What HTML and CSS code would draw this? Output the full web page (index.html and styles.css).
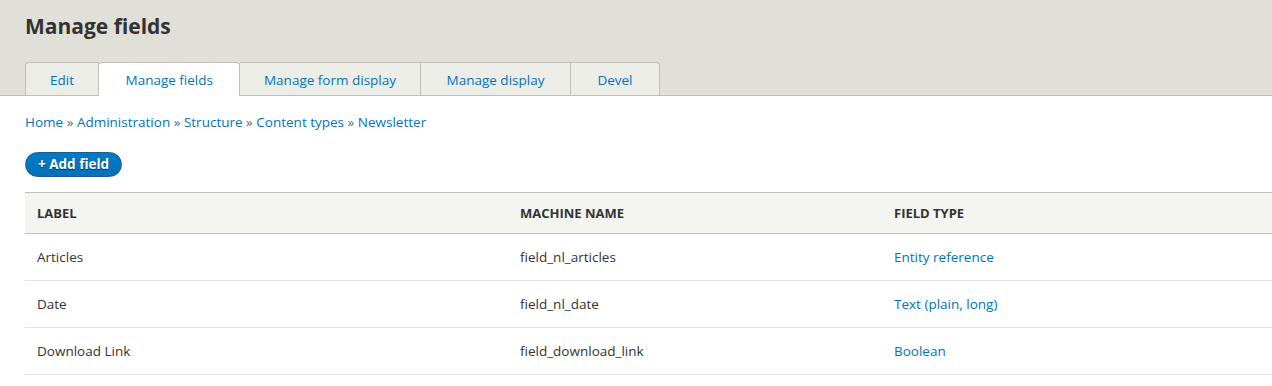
FILE: index.html
```html
<!DOCTYPE html>
<html lang="en">
<head>
    <meta charset="UTF-8">
    <title>Manage fields | Newsletter</title>
    <link rel="stylesheet" href="styles.css">
</head>
<body>
    <div class="page-header">
        <h1 class="page-title">Manage fields</h1>
        <ul class="tabs">
            <li class="tab"><a href="#">Edit</a></li>
            <li class="tab is-active"><a href="#">Manage fields</a></li>
            <li class="tab"><a href="#">Manage form display</a></li>
            <li class="tab"><a href="#">Manage display</a></li>
            <li class="tab"><a href="#">Devel</a></li>
        </ul>
    </div>

    <div class="content">
        <nav class="breadcrumb">
            <a href="#">Home</a> <span class="sep">»</span>
            <a href="#">Administration</a> <span class="sep">»</span>
            <a href="#">Structure</a> <span class="sep">»</span>
            <a href="#">Content types</a> <span class="sep">»</span>
            <a href="#">Newsletter</a>
        </nav>

        <div class="actions">
            <a class="button-action" href="#">+ Add field</a>
        </div>

        <table class="field-table">
            <thead>
                <tr>
                    <th class="col-label">Label</th>
                    <th class="col-machine">Machine name</th>
                    <th>Field type</th>
                </tr>
            </thead>
            <tbody>
                <tr>
                    <td>Articles</td>
                    <td>field_nl_articles</td>
                    <td><a href="#">Entity reference</a></td>
                </tr>
                <tr>
                    <td>Date</td>
                    <td>field_nl_date</td>
                    <td><a href="#">Text (plain, long)</a></td>
                </tr>
                <tr>
                    <td>Download Link</td>
                    <td>field_download_link</td>
                    <td><a href="#">Boolean</a></td>
                </tr>
            </tbody>
        </table>
    </div>
</body>
</html>
```

FILE: styles.css
```css
body {
    margin: 0;
    font-family: "Open Sans", "DejaVu Sans", sans-serif;
    font-size: 13.5px;
    color: #333;
    background: #fff;
    overflow: hidden;
}
a {
    color: #0074bd;
    text-decoration: none;
}
.page-header {
    background: #e0e0d8;
    border-bottom: 1px solid #bfbfba;
    padding: 0 25px;
}
.page-title {
    margin: 0;
    padding: 12px 0 0;
    height: 50px;
    font-size: 21px;
    font-weight: 700;
    color: #333;
    box-sizing: border-box;
}
.tabs {
    list-style: none;
    margin: 12px 0 0;
    padding: 0;
    display: flex;
    align-items: flex-end;
}
.tab {
    background: #edede8;
    border: 1px solid #bfbfba;
    border-bottom: none;
    border-left: none;
    height: 33px;
    box-sizing: border-box;
}
.tab:first-child {
    border-left: 1px solid #bfbfba;
    border-top-left-radius: 4px;
}
.tab:last-child {
    border-top-right-radius: 4px;
}
.tab.is-active {
    background: #fff;
    border-top-left-radius: 4px;
    border-top-right-radius: 4px;
    height: 34px;
    margin-bottom: -1px;
}
.tab a {
    display: block;
    padding: 7px 25px 0;
    line-height: 20px;
    white-space: nowrap;
}
.tab:first-child a { padding-left: 24px; padding-right: 24px; }
.tab.is-active a { padding-left: 26.5px; padding-right: 26.5px; }
.tab:nth-child(3) a { padding-left: 23.5px; padding-right: 23.5px; }
.tab:nth-child(4) a { padding-left: 26px; padding-right: 26px; }
.tab:nth-child(5) a { padding-left: 26px; padding-right: 26px; }
.content {
    padding: 0 0 0 25px;
}
.breadcrumb {
    padding-top: 17px;
    line-height: 18px;
}
.breadcrumb .sep {
    color: #666;
}
.actions {
    padding: 21px 0 15px;
    line-height: 0;
}
.button-action {
    display: inline-block;
    height: 25px;
    line-height: 23px;
    padding: 0 12px;
    box-sizing: border-box;
    border: 1px solid #1e5c90;
    border-radius: 13px;
    background: linear-gradient(#007bc6, #0071b8);
    color: #fff;
    font-weight: 700;
    text-shadow: 0 1px 1px rgba(0, 0, 0, 0.5);
}
.field-table {
    width: 100%;
    border-collapse: collapse;
}
.field-table th {
    background: #f4f4f1;
    border-top: 1px solid #bfbfba;
    border-bottom: 1px solid #bfbfba;
    height: 40px;
    padding: 0 12px;
    text-align: left;
    text-transform: uppercase;
    font-size: 13px;
    font-weight: 700;
    color: #333;
}
.field-table .col-label { width: 459px; }
.field-table .col-machine { width: 350px; }
.field-table td {
    border-bottom: 1px solid #e6e4df;
    height: 46px;
    padding: 0 12px;
}
```
